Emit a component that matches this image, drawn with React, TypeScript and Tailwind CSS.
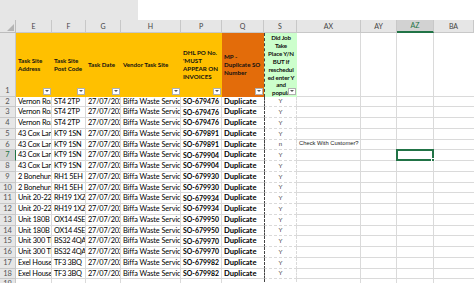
import React from 'react';

// column widths: row header, E, F, G, H, P, Q, S, AX, AY, AZ, BA
const GRID = 'grid grid-cols-[16px_36px_34px_35px_60px_41px_42px_33px_64px_36px_37px_40px]';

const letters = ['E', 'F', 'G', 'H', 'P', 'Q', 'S', 'AX', 'AY', 'AZ', 'BA'];

interface Row {
  n: number;
  addr: string;
  post: string;
  so: string;
  done: string;
  note?: string;
}

const rows: Row[] = [
  { n: 2, addr: 'Vernon Road', post: 'ST4 2TP', so: 'SO-679476', done: 'Y' },
  { n: 3, addr: 'Vernon Road', post: 'ST4 2TP', so: 'SO-679476', done: 'Y' },
  { n: 4, addr: 'Vernon Road', post: 'ST4 2TP', so: 'SO-679476', done: 'Y' },
  { n: 5, addr: '43 Cox Lane', post: 'KT9 1SN', so: 'SO-679891', done: 'Y' },
  { n: 6, addr: '43 Cox Lane', post: 'KT9 1SN', so: 'SO-679891', done: 'n', note: 'Check With Customer?' },
  { n: 7, addr: '43 Cox Lane', post: 'KT9 1SN', so: 'SO-679904', done: 'Y' },
  { n: 8, addr: '43 Cox Lane', post: 'KT9 1SN', so: 'SO-679904', done: 'Y' },
  { n: 9, addr: '2 Bonehurst Road', post: 'RH1 5EH', so: 'SO-679930', done: 'Y' },
  { n: 10, addr: '2 Bonehurst Road', post: 'RH1 5EH', so: 'SO-679930', done: 'Y' },
  { n: 11, addr: 'Unit 20-22 Reigate', post: 'RH19 1XZ', so: 'SO-679934', done: 'Y' },
  { n: 12, addr: 'Unit 20-22 Reigate', post: 'RH19 1XZ', so: 'SO-679934', done: 'Y' },
  { n: 13, addr: 'Unit 180B', post: 'OX14 4SE', so: 'SO-679950', done: 'Y' },
  { n: 14, addr: 'Unit 180B', post: 'OX14 4SE', so: 'SO-679950', done: 'Y' },
  { n: 15, addr: 'Unit 300 The Park', post: 'BS32 4QA', so: 'SO-679970', done: 'Y' },
  { n: 16, addr: 'Unit 300 The Park', post: 'BS32 4QA', so: 'SO-679970', done: 'Y' },
  { n: 17, addr: 'Exel House', post: 'TF3 3BQ', so: 'SO-679982', done: 'Y' },
  { n: 18, addr: 'Exel House', post: 'TF3 3BQ', so: 'SO-679982', done: 'Y' },
];

const FilterBtn = () => (
  <span className="absolute bottom-[2px] right-[1px] flex h-[7px] w-[8px] items-center justify-center border border-[#b0b0b0] bg-white">
    <span className="h-0 w-0 border-x-[2px] border-t-[2px] border-x-transparent border-t-[#555]" />
  </span>
);

const cell = 'overflow-hidden whitespace-nowrap border-r border-b border-[#dadada] pl-[2px] flex items-center';

export default function App() {
  return (
    <div className="h-[283px] w-[474px] overflow-hidden bg-white font-['Lato',sans-serif] text-black">
      {/* top strip */}
      <div className="flex h-[20px]">
        <div className="w-[138px] bg-[#e6e6e6]" />
        <div className="flex-1 bg-white" />
      </div>

      {/* column letters */}
      <div className={`${GRID} h-[13px] bg-[#e6e6e6] text-[7px] text-[#444]`}>
        <div className="flex items-end justify-end border-r border-b border-[#bdbdbd] p-[1px]">
          <svg width="7" height="7" viewBox="0 0 7 7">
            <polygon points="7,0 7,7 0,7" fill="#b4b4b4" />
          </svg>
        </div>
        {letters.map((l) => (
          <div
            key={l}
            className={
              l === 'AZ'
                ? 'flex items-center justify-center border-r border-b-2 border-r-[#c8c8c8] border-b-[#217346] bg-[#d2d2d2] text-[#217346]'
                : 'flex items-center justify-center border-r border-b border-[#c8c8c8]'
            }
          >
            {l}
          </div>
        ))}
      </div>

      {/* header row 1 */}
      <div className={`${GRID} h-[63.5px] text-[6.2px] font-bold leading-[7.9px] text-[#111]`}>
        <div className="flex items-end justify-center border-r border-b border-[#c8c8c8] bg-[#e6e6e6] pb-[1px] text-[7.5px] font-normal text-[#555]">1</div>
        <div className="relative flex items-center bg-[#ffc000] pl-[2px]">
          <span>Task Site<br />Address</span>
          <FilterBtn />
        </div>
        <div className="relative flex items-center bg-[#ffc000] pl-[2px]">
          <span>Task Site<br />Post Code</span>
          <FilterBtn />
        </div>
        <div className="relative flex items-center bg-[#ffc000] pl-[2px]">
          <span>Task Date</span>
          <FilterBtn />
        </div>
        <div className="relative flex items-center bg-[#ffc000] pl-[2px]">
          <span>Vendor Task Site</span>
          <FilterBtn />
        </div>
        <div className="relative flex items-center bg-[#ffc000] pl-[2px]">
          <span>DHL PO No.<br />'MUST<br />APPEAR ON<br />INVOICES</span>
          <FilterBtn />
        </div>
        <div className="relative flex items-center bg-[#e36c0a] pl-[2px]">
          <span>MP -<br />Duplicate SO<br />Number</span>
          <FilterBtn />
        </div>
        <div className="relative overflow-hidden border-l border-dashed border-l-[#444] bg-[#ccffcc] pt-[1px] text-center tracking-[-0.15px]">
          <span>Did Job<br />Take<br />Place Y/N<br />BUT if<br />reschedul<br />ed enter Y<br />and<br />popula</span>
          <FilterBtn />
        </div>
        <div className="border-r border-b border-[#dadada]" />
        <div className="border-r border-b border-[#dadada]" />
        <div className="border-r border-b border-[#dadada]" />
        <div className="border-b border-[#dadada]" />
      </div>

      {/* data rows */}
      {[...rows, { n: 19, addr: '', post: '', so: '', done: '' } as Row].map((r) => (
        <div key={r.n} className={`${GRID} h-[10.75px] text-[7.4px] leading-none`}>
          <div
            className={
              r.n === 7
                ? 'flex items-center justify-center border-r border-b border-r-[#217346] border-b-[#c8c8c8] bg-[#d2d2d2] text-[7.5px] text-[#217346]'
                : 'flex items-center justify-center border-r border-b border-[#c8c8c8] bg-[#e6e6e6] text-[7.5px] text-[#555]'
            }
          >
            {r.n}
          </div>
          <div className={`${cell} tracking-[-0.2px]`}>{r.addr}</div>
          <div className={`${cell} tracking-[-0.3px]`}>{r.post}</div>
          <div className={`${cell} tracking-[-0.2px]`}>{r.addr ? '27/07/2020' : ''}</div>
          <div className={`${cell} tracking-[-0.1px]`}>{r.addr ? 'Biffa Waste Services Ltd' : ''}</div>
          <div className={`${cell} text-[6.9px] font-bold`}>{r.so}</div>
          <div className="flex items-center overflow-hidden whitespace-nowrap border-b border-[#dadada] pl-[2px] text-[7.6px] font-bold">
            {r.addr ? 'Duplicate' : ''}
          </div>
          <div className="flex items-center justify-center border-l border-r border-b border-dashed border-l-[#444] border-r-[#dadada] border-b-[#dadada] font-['Liberation_Sans',sans-serif] text-[6px] text-[#333]">
            {r.done}
          </div>
          <div className={`${cell} overflow-visible font-['Liberation_Sans',sans-serif] text-[5.8px] text-[#222]`}>
            {r.note ?? ''}
          </div>
          <div className={cell} />
          <div className={`${cell} relative overflow-visible`}>
            {r.n === 7 && (
              <span className="absolute -left-[1px] -top-[1px] h-[12px] w-[38px] border-2 border-[#217346]">
                <span className="absolute -bottom-[3px] -right-[3px] h-[4px] w-[4px] border border-white bg-[#217346]" />
              </span>
            )}
          </div>
          <div className="border-b border-[#dadada]" />
        </div>
      ))}
    </div>
  );
}
